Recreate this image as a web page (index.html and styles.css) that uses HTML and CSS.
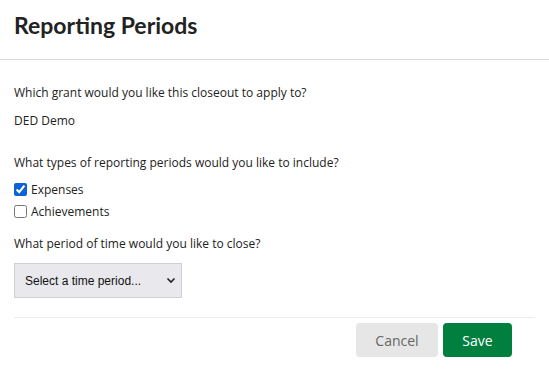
FILE: index.html
```html
<!DOCTYPE html>
<html lang="en">
<head>
  <meta charset="UTF-8" />
  <meta name="viewport" content="width=device-width, initial-scale=1.0"/>
  <title>Reporting Periods</title>
  <link rel="stylesheet" href="styles.css">
</head>
<body>

  <div class="modal">
    <div class="modal-header">
      <h2>Reporting Periods</h2>
    </div>
    <div class="modal-body">
      <p class="question">Which grant would you like this closeout to apply to?</p>
      <p class="answer">DED Demo</p>

      <p class="question types">What types of reporting periods would you like to include?</p>
      <label class="check"><input type="checkbox" checked /> Expenses</label>
      <label class="check"><input type="checkbox" /> Achievements</label>

      <p class="question period">What period of time would you like to close?</p>
      <div class="select-wrap">
        <select id="period">
          <option>Select a time period...</option>
        </select>
        <svg class="chevron" width="10" height="7" viewBox="0 0 10 7">
          <path d="M1.5 1.5 L5 5 L8.5 1.5" fill="none" stroke="#222" stroke-width="1.6"/>
        </svg>
      </div>
    </div>
    <div class="modal-footer">
      <button type="button" class="btn btn-cancel">Cancel</button>
      <button type="button" class="btn btn-save">Save</button>
    </div>
  </div>

</body>
</html>
```

FILE: styles.css
```css
body {
  margin: 0;
  font-family: 'Open Sans', 'Noto Sans', sans-serif;
  background: white;
  color: #222;
}

.modal {
  width: 549px;
}

.modal-header {
  padding: 8px 14px 17px;
  border-bottom: 1px solid #dcdcdc;
}

.modal-header h2 {
  margin: 0;
  font-family: 'Lato', sans-serif;
  font-size: 23px;
  font-weight: bold;
  line-height: 34px;
  color: #222;
}

.modal-body {
  padding: 24px 14px 19px;
}

.question {
  margin: 0;
  font-size: 12px;
  line-height: 17px;
}

.answer {
  margin: 11px 0 0;
  font-size: 12px;
  line-height: 17px;
}

.types {
  margin-top: 25px;
}

.check {
  display: flex;
  align-items: center;
  gap: 4px;
  font-size: 12px;
  line-height: 17px;
  margin-top: 10px;
}

.check + .check {
  margin-top: 5px;
}

.check input {
  margin: 0;
  width: 13px;
  height: 13px;
  accent-color: #0b63d6;
}

.period {
  margin-top: 15px;
}

.select-wrap {
  position: relative;
  width: 168px;
  margin-top: 11px;
}

.select-wrap select {
  appearance: none;
  display: block;
  width: 168px;
  height: 35px;
  padding: 0 10px;
  background: #e9e9ed;
  border: 1px solid #cfcfd4;
  border-radius: 0;
  font-family: 'Liberation Sans', Arial, sans-serif;
  font-size: 12px;
  color: #111;
}

.chevron {
  position: absolute;
  right: 6px;
  top: 14px;
  pointer-events: none;
}

.modal-footer {
  margin: 0 14px;
  padding: 5px 23px 0 0;
  border-top: 1px solid #ececec;
  display: flex;
  justify-content: flex-end;
  gap: 5px;
}

.btn {
  height: 34px;
  border: none;
  border-radius: 4px;
  font-family: 'Open Sans', sans-serif;
  font-size: 14px;
  cursor: pointer;
}

.btn-cancel {
  width: 82px;
  background-color: #e6e6e6;
  color: #666;
}

.btn-save {
  width: 69px;
  background-color: #007f3f;
  color: white;
}
```
